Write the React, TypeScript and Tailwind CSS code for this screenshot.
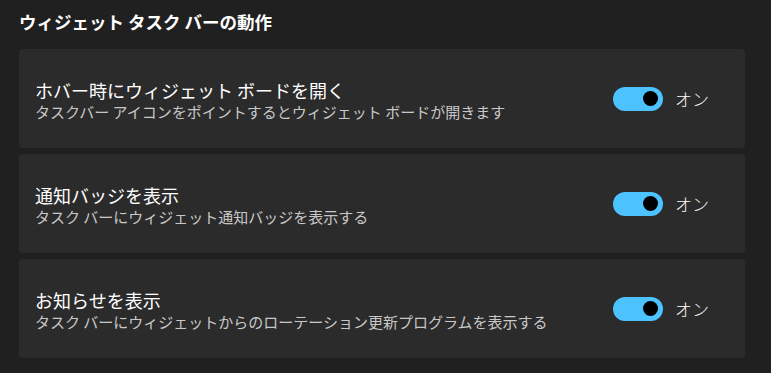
import React from "react";

const items = [
  {
    title: "ホバー時にウィジェット ボードを開く",
    desc: "タスクバー アイコンをポイントするとウィジェット ボードが開きます",
  },
  {
    title: "通知バッジを表示",
    desc: "タスク バーにウィジェット通知バッジを表示する",
  },
  {
    title: "お知らせを表示",
    desc: "タスク バーにウィジェットからのローテーション更新プログラムを表示する",
  },
];

function Toggle() {
  return (
    <div className="flex items-center gap-[12px]">
      <div className="w-[50px] h-[24px] rounded-full bg-[#4cc2ff] flex items-center justify-end pr-[5px]">
        <div className="w-[15px] h-[15px] rounded-full bg-black" />
      </div>
      <span className="text-[17px] text-white leading-none font-light">オン</span>
    </div>
  );
}

export default function App() {
  return (
    <div
      className="w-[771px] h-[373px] bg-[#202020] text-white overflow-hidden"
      style={{ fontFamily: '"Noto Sans CJK JP", "Noto Sans", sans-serif' }}
    >
      <div className="pl-[19px] pt-[10px]">
        <h2 className="text-[17.5px] font-bold leading-[24px] h-[39px]">
          ウィジェット タスク バーの動作
        </h2>
        <div className="flex flex-col gap-[6px] w-[726px]">
          {items.map((it) => (
            <div
              key={it.title}
              className="h-[99px] bg-[#2b2b2b] rounded-[4px] flex items-center pl-[16px] pr-[36px]"
            >
              <div className="flex-1 flex flex-col pt-[3px]">
                <div className="text-[18px] leading-[24px] text-white">{it.title}</div>
                <div className="text-[15px] leading-[20px] text-[#c8c8c8]">{it.desc}</div>
              </div>
              <Toggle />
            </div>
          ))}
        </div>
      </div>
    </div>
  );
}
